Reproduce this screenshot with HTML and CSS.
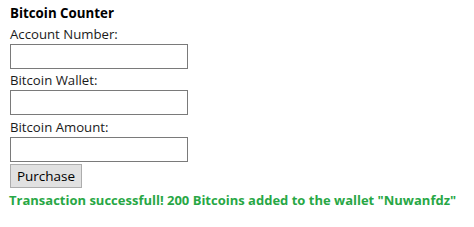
FILE: index.html
```html
<!DOCTYPE html>
<html>
<head>
<meta charset="utf-8">
<link rel="stylesheet" href="styles.css">
</head>
<body>
<div class="form">
  <div class="title">Bitcoin Counter</div>
  <label class="label">Account Number:</label>
  <input class="field" type="text">
  <label class="label">Bitcoin Wallet:</label>
  <input class="field" type="text">
  <label class="label">Bitcoin Amount:</label>
  <input class="field" type="text">
  <button class="btn">Purchase</button>
  <div class="msg">Transaction successfull! 200 Bitcoins added to the wallet "Nuwanfdz"</div>
</div>
</body>
</html>
```
FILE: styles.css
```css
body {
  margin: 0;
  padding: 4px 10px;
  font-family: "Open Sans", "Noto Sans", sans-serif;
  color: #000;
  background: #fff;
}
.form {
  display: flex;
  flex-direction: column;
  align-items: flex-start;
}
.title {
  font-weight: bold;
  font-size: 13.3px;
  line-height: 18px;
}
.label {
  font-size: 13.2px;
  line-height: 18px;
  margin-top: 2.5px;
  color: #1a1a1a;
}
.field {
  box-sizing: border-box;
  width: 178px;
  height: 25px;
  margin: 1px 0 0 0;
  border: 1px solid #7a7a7a;
  padding: 2px;
  font: inherit;
}
.btn {
  box-sizing: border-box;
  width: 72px;
  height: 24px;
  margin: 2px 0 0 0;
  background: #e1e1e1;
  border: 1px solid #adadad;
  font-family: inherit;
  font-size: 13.5px;
  padding: 0;
  color: #000;
}
.msg {
  margin-top: 3px;
  margin-left: -1px;
  color: #28a745;
  font-weight: bold;
  font-size: 13px;
  line-height: 18px;
}
```
